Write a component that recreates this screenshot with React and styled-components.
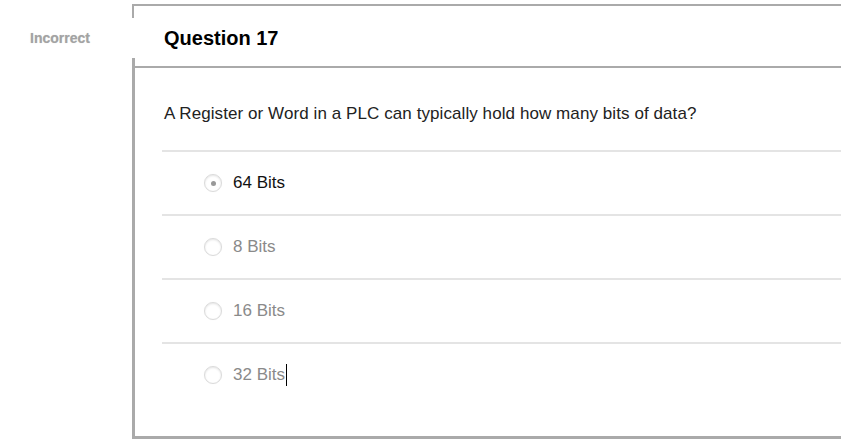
import React from 'react'
import styled, { createGlobalStyle } from 'styled-components'

const GlobalStyle = createGlobalStyle`
  body {
    margin: 0;
    background: #fff;
    font-family: "Liberation Sans", Arial, sans-serif;
    overflow: hidden;
  }
`;

const options = [
  { label: '64 Bits', selected: true },
  { label: '8 Bits' },
  { label: '16 Bits' },
  { label: '32 Bits', caret: true },
];

const App = () => {
  return (
    <>
      <GlobalStyle />
      <Page>
        <Side>
          <Flag>Incorrect</Flag>
        </Side>
        <QuestionBox>
          <Header>
            <Title>Question 17</Title>
          </Header>
          <Body>
            <Text>A Register or Word in a PLC can typically hold how many bits of data?</Text>
            {options.map((o) => (
              <Option key={o.label}>
                <Radio $selected={o.selected} />
                <Label $selected={o.selected}>
                  {o.label}
                  {o.caret && <Caret />}
                </Label>
              </Option>
            ))}
          </Body>
        </QuestionBox>
      </Page>
    </>
  )
};
export default App;

const Page = styled.div`
  display: flex;
  padding-top: 4px;
  width: 841px;
  height: 439px;
  box-sizing: border-box;
`;

const Side = styled.div`
  width: 132px;
  flex-shrink: 0;
  padding: 26px 0 0 30px;
  box-sizing: border-box;
`;

const Flag = styled.div`
  font-size: 14px;
  font-weight: bold;
  color: #a3a3a3;
  text-shadow: 0 0 1px rgba(0, 0, 0, 0.2);
`;

const QuestionBox = styled.div`
  flex: 1;
  display: flex;
  flex-direction: column;
`;

const Header = styled.div`
  position: relative;
  height: 60px;
  border-top: 2px solid #aaa;
  border-bottom: 2px solid #aaa;
  padding-left: 32px;
  display: flex;
  align-items: center;

  &::before {
    content: '';
    position: absolute;
    left: 0;
    top: 0;
    width: 2px;
    height: 12px;
    background: #aaa;
  }
  &::after {
    content: '';
    position: absolute;
    left: 0;
    bottom: -2px;
    width: 3px;
    height: 10px;
    background: #aaa;
  }
`;

const Title = styled.h2`
  margin: 5px 0 0;
  font-size: 20px;
  font-weight: bold;
  color: #000;
`;

const Body = styled.div`
  flex: 1;
  border-left: 3px solid #aaa;
  border-bottom: 3px solid #aaa;
  padding: 36px 0 0 27px;
`;

const Text = styled.p`
  margin: 0 0 26px 2px;
  font-size: 17px;
  line-height: 20px;
  letter-spacing: 0.08px;
  color: #222;
`;

const Option = styled.div`
  height: 62px;
  border-top: 2px solid #e4e4e4;
  display: flex;
  align-items: center;
  padding-left: 42px;
`;

const Radio = styled.span`
  width: 18px;
  height: 18px;
  border-radius: 50%;
  border: 1px solid #dadada;
  box-sizing: border-box;
  box-shadow: inset 0 1px 2px rgba(0, 0, 0, 0.1), 0 0 1px rgba(0, 0, 0, 0.08);
  margin-right: 11px;
  display: flex;
  align-items: center;
  justify-content: center;

  &::after {
    content: '';
    width: 5px;
    height: 5px;
    border-radius: 50%;
    background: #999;
    display: ${(p) => (p.$selected ? 'block' : 'none')};
  }
`;

const Label = styled.span`
  font-size: 17px;
  color: ${(p) => (p.$selected ? '#111' : '#8a8a8a')};
  display: flex;
  align-items: center;
`;

const Caret = styled.span`
  display: inline-block;
  width: 1px;
  height: 22px;
  background: #000;
  margin-left: 1px;
`;
